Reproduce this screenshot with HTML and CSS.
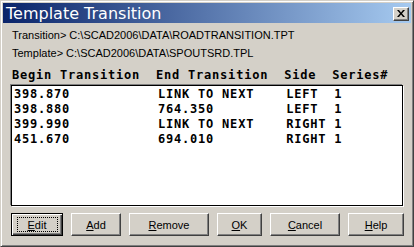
FILE: index.html
```html
<!DOCTYPE html>
<html>
<head>
    <meta charset="UTF-8">
    <link rel="stylesheet" href="styles.css">
</head>
<body>
    <div class="window">
        <div class="titlebar">
            <span class="title">Template Transition</span>
            <button class="close-btn" title="Close">
                <svg width="8" height="7" viewBox="0 0 8 7">
                    <path d="M0 0h2l2 2.5L6 0h2L5 3.5 8 7H6L4 4.5 2 7H0l3-3.5z" fill="#000"/>
                </svg>
            </button>
        </div>

        <div class="info">
            <div class="info-line">Transition&gt; C:\SCAD2006\DATA\ROADTRANSITION.TPT</div>
            <div class="info-line">Template&gt; C:\SCAD2006\DATA\SPOUTSRD.TPL</div>
        </div>

        <div class="list-header mono">Begin Transition  End Transition  Side  Series#</div>

        <div class="listbox mono">
            <div class="row">398.870           LINK TO NEXT    LEFT  1</div>
            <div class="row">398.880           764.350         LEFT  1</div>
            <div class="row">399.990           LINK TO NEXT    RIGHT 1</div>
            <div class="row">451.670           694.010         RIGHT 1</div>
        </div>

        <div class="btn-row">
            <button class="btn btn-default btn-edit"><span class="focus"><u>E</u>dit</span></button>
            <button class="btn btn-add"><u>A</u>dd</button>
            <button class="btn btn-remove"><u>R</u>emove</button>
            <button class="btn btn-ok"><u>O</u>K</button>
            <button class="btn btn-cancel"><u>C</u>ancel</button>
            <button class="btn btn-help"><u>H</u>elp</button>
        </div>
    </div>
</body>
</html>
```

FILE: styles.css
```css
* {
    box-sizing: border-box;
}

body {
    margin: 0;
    width: 414px;
    height: 247px;
    overflow: hidden;
    background: #d4d0c8;
    font-family: "Liberation Sans", Arial, sans-serif;
    font-size: 11px;
    color: #000;
}

.window {
    width: 414px;
    height: 247px;
    background: #d4d0c8;
    border: 1px solid;
    border-color: #d4d0c8 #404040 #404040 #d4d0c8;
    box-shadow: inset 1px 1px 0 #fff, inset -1px -1px 0 #808080;
    padding: 2px;
}

.titlebar {
    height: 20px;
    background: linear-gradient(to right, #0a246a, #a6caf0);
    display: flex;
    align-items: center;
    justify-content: space-between;
    padding: 0 2px 0 3px;
}

.title {
    color: #fff;
    font-family: "DejaVu Sans", Verdana, sans-serif;
    font-size: 16px;
    line-height: 20px;
    padding-top: 1px;
}

.close-btn {
    width: 16px;
    height: 14px;
    margin-top: 2px;
    padding: 0;
    background: #d4d0c8;
    border: 1px solid;
    border-color: #fff #404040 #404040 #fff;
    box-shadow: inset -1px -1px 0 #808080;
    display: flex;
    align-items: center;
    justify-content: center;
}

.close-btn svg {
    display: block;
    margin: 0 1px 1px 0;
}

.info {
    margin-top: 3px;
    padding-left: 9px;
}

.info-line {
    line-height: 18px;
    white-space: pre;
}

.mono {
    font-family: "DejaVu Sans Mono", "Liberation Mono", monospace;
    font-weight: bold;
    font-size: 12px;
    letter-spacing: 0.78px;
}

.list-header {
    padding-left: 9px;
    height: 15px;
    line-height: 15px;
    margin-top: 6px;
    white-space: pre;
}

.listbox {
    margin: 2px 0 0 8px;
    width: 392px;
    height: 121px;
    background: #fff;
    border: 1px solid #000;
    box-shadow: -1px -1px 0 #808080, 1px 1px 0 #fff;
    padding: 1px 0 0 2px;
}

.row {
    height: 15px;
    line-height: 15px;
    white-space: pre;
}

.btn-row {
    display: flex;
    gap: 8px;
    margin: 7px 0 0 8px;
}

.btn {
    height: 23px;
    padding: 0;
    background: #d4d0c8;
    font-family: "Liberation Sans", Arial, sans-serif;
    font-size: 11px;
    color: #000;
    border: 1px solid;
    border-color: #fff #404040 #404040 #fff;
    box-shadow: inset -1px -1px 0 #808080;
    display: flex;
    align-items: center;
    justify-content: center;
}

.btn-default {
    border: 1px solid #000;
    box-shadow: inset 1px 1px 0 #fff, inset -1px -1px 0 #404040, inset -2px -2px 0 #808080;
}

.focus {
    border: 1px dotted #000;
    width: 41px;
    height: 15px;
    display: flex;
    align-items: center;
    justify-content: center;
}

.btn-edit { width: 52px; }
.btn-add { width: 50px; }
.btn-remove { width: 80px; }
.btn-ok { width: 45px; }
.btn-cancel { width: 70px; }
.btn-help { width: 56px; }
```
